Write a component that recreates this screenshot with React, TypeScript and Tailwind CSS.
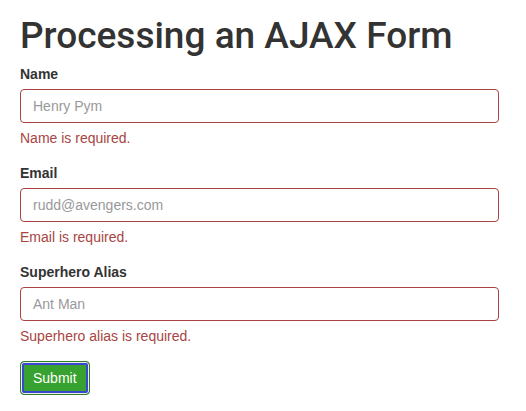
import React from 'react';

const FIELDS = [
  { id: 'name', label: 'Name', placeholder: 'Henry Pym', error: 'Name is required.' },
  { id: 'email', label: 'Email', placeholder: 'rudd@avengers.com', error: 'Email is required.' },
  { id: 'superheroAlias', label: 'Superhero Alias', placeholder: 'Ant Man', error: 'Superhero alias is required.' },
];

export default function App() {
  return (
    <div className="min-h-screen bg-white px-5 text-[14px] leading-[20px] text-[#333] [font-family:'Liberation_Sans',Arial,sans-serif]">
      <h1 className="pt-[16px] pb-[8px] text-[37px] leading-[39.6px] font-medium text-[#333] [font-family:Roboto,'Liberation_Sans',sans-serif]">
        Processing an AJAX Form
      </h1>

      <form onSubmit={(e) => e.preventDefault()}>
        {FIELDS.map((field) => (
          <div key={field.id} className="mb-[15px]">
            <label htmlFor={field.id} className="mb-[5px] block font-bold">
              {field.label}
            </label>
            <input
              id={field.id}
              type="text"
              placeholder={field.placeholder}
              className="block h-[34px] w-[479px] rounded-[4px] border border-[#a94442] bg-white px-3 text-[14px] text-[#555] placeholder:text-[#999] focus:outline-none"
            />
            <span className="mt-[5px] block text-[#a94442]">{field.error}</span>
          </div>
        ))}

        <button
          type="submit"
          className="h-[34px] rounded-[4px] border border-[#2f7d2a] bg-[#37a22f] px-3 text-[14px] text-white shadow-[inset_0_0_0_1px_#e8f0e8,inset_0_0_0_3px_#3c44d4]"
        >
          Submit
        </button>
      </form>
    </div>
  );
}
